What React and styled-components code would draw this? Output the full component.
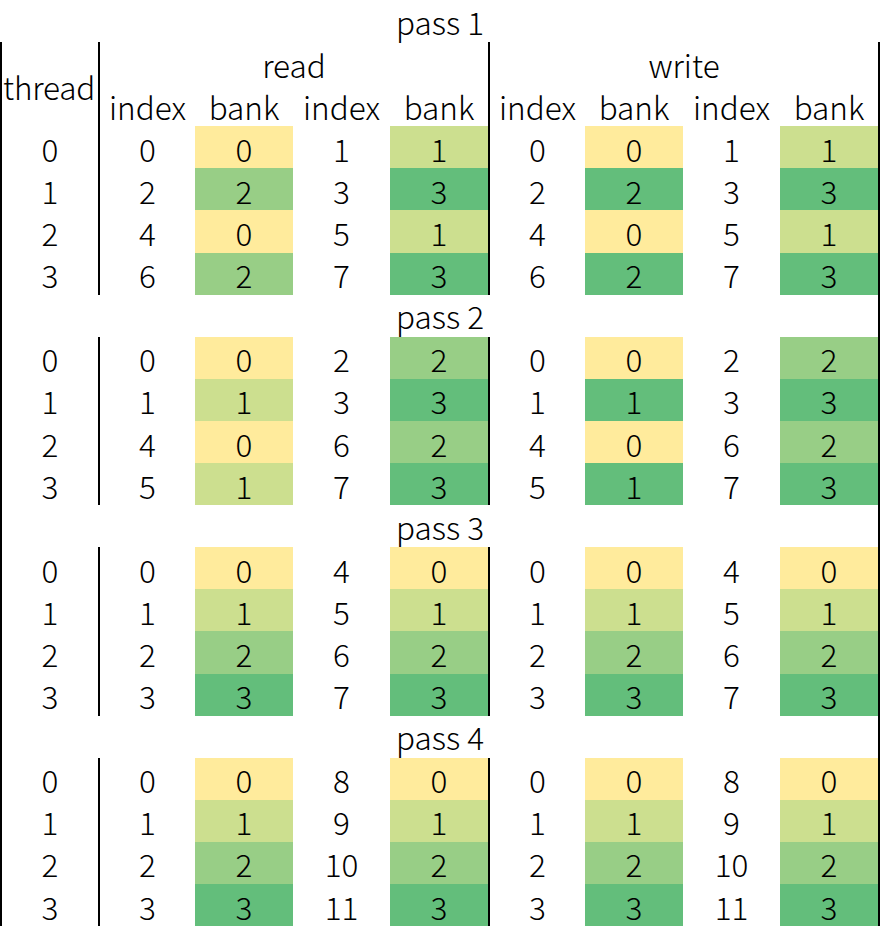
import React from "react";
import styled, { createGlobalStyle } from "styled-components";

const Global = createGlobalStyle`
  html, body { margin: 0; padding: 0; background: #fff; }
  body { font-family: "Noto Sans CJK SC", "Noto Sans", sans-serif; color: #000; }
`;

const FILLS = {
  Y: "#FFEB9C",
  L: "#CCDF8F",
  M: "#98CE86",
  D: "#63BE7B",
};

const Sheet = styled.div`
  display: grid;
  grid-template-columns: 98px 97px 98px 97px 98px 97px 98px 97px 100px;
  grid-auto-rows: 42.1px;
  width: 880px;
`;

const Cell = styled.div`
  box-sizing: border-box;
  display: flex;
  align-items: flex-end;
  justify-content: center;
  padding-bottom: 4px;
  font-size: 31.5px;
  font-weight: 300;
  line-height: 1;
  white-space: nowrap;
  grid-column: ${(p) => (p.$span ? `span ${p.$span}` : "auto")};
  grid-row: ${(p) => (p.$rows ? `span ${p.$rows}` : "auto")};
  border-left: ${(p) => (p.$left ? "2px solid #000" : "0")};
  border-right: ${(p) => (p.$right ? "2px solid #000" : "0")};
  background: ${(p) => (p.$fill ? FILLS[p.$fill] : "transparent")};
`;

const ThreadHead = styled(Cell)`
  align-items: center;
  padding-bottom: 0;
  padding-top: 6px;
  justify-content: flex-start;
  padding-left: 1px;
  letter-spacing: -0.2px;
`;

const PassTitle = styled(Cell)`
  padding-bottom: 5px;
`;

const passes = [
  {
    title: "pass 1",
    rows: [
      [0, 0, 0, 1, 1, 0, 0, 1, 1],
      [1, 2, 2, 3, 3, 2, 2, 3, 3],
      [2, 4, 0, 5, 1, 4, 0, 5, 1],
      [3, 6, 2, 7, 3, 6, 2, 7, 3],
    ],
    fills: [
      ["Y", "L", "Y", "L"],
      ["M", "D", "D", "D"],
      ["Y", "L", "Y", "L"],
      ["M", "D", "D", "D"],
    ],
  },
  {
    title: "pass 2",
    rows: [
      [0, 0, 0, 2, 2, 0, 0, 2, 2],
      [1, 1, 1, 3, 3, 1, 1, 3, 3],
      [2, 4, 0, 6, 2, 4, 0, 6, 2],
      [3, 5, 1, 7, 3, 5, 1, 7, 3],
    ],
    fills: [
      ["Y", "M", "Y", "M"],
      ["L", "D", "D", "D"],
      ["Y", "M", "Y", "M"],
      ["L", "D", "D", "D"],
    ],
  },
  {
    title: "pass 3",
    rows: [
      [0, 0, 0, 4, 0, 0, 0, 4, 0],
      [1, 1, 1, 5, 1, 1, 1, 5, 1],
      [2, 2, 2, 6, 2, 2, 2, 6, 2],
      [3, 3, 3, 7, 3, 3, 3, 7, 3],
    ],
    fills: [
      ["Y", "Y", "Y", "Y"],
      ["L", "L", "L", "L"],
      ["M", "M", "M", "M"],
      ["D", "D", "D", "D"],
    ],
  },
  {
    title: "pass 4",
    rows: [
      [0, 0, 0, 8, 0, 0, 0, 8, 0],
      [1, 1, 1, 9, 1, 1, 1, 9, 1],
      [2, 2, 2, 10, 2, 2, 2, 10, 2],
      [3, 3, 3, 11, 3, 3, 3, 11, 3],
    ],
    fills: [
      ["Y", "Y", "Y", "Y"],
      ["L", "L", "L", "L"],
      ["M", "M", "M", "M"],
      ["D", "D", "D", "D"],
    ],
  },
];

const bankCols = { 2: 0, 4: 1, 6: 2, 8: 3 };

function DataRow({ values, fills }) {
  return values.map((v, c) => (
    <Cell
      key={c}
      $left={c === 0 || c === 1 || c === 5}
      $right={c === 8}
      $fill={c in bankCols ? fills[bankCols[c]] : undefined}
    >
      {v}
    </Cell>
  ));
}

function Header() {
  const sub = ["index", "bank", "index", "bank", "index", "bank", "index", "bank"];
  return (
    <>
      <ThreadHead $rows={2} $left>
        thread
      </ThreadHead>
      <Cell $span={4} $left>
        read
      </Cell>
      <Cell $span={4} $left $right>
        write
      </Cell>
      {sub.map((s, i) => (
        <Cell key={i} $left={i === 0 || i === 4} $right={i === 7}>
          {s}
        </Cell>
      ))}
    </>
  );
}

export default function App() {
  return (
    <>
      <Global />
      <Sheet>
        {passes.map((p, pi) => (
          <React.Fragment key={p.title}>
            <PassTitle $span={9} $left={pi > 0} $right={pi > 0}>
              {p.title}
            </PassTitle>
            {pi === 0 && <Header />}
            {p.rows.map((r, ri) => (
              <DataRow key={ri} values={r} fills={p.fills[ri]} />
            ))}
          </React.Fragment>
        ))}
      </Sheet>
    </>
  );
}
